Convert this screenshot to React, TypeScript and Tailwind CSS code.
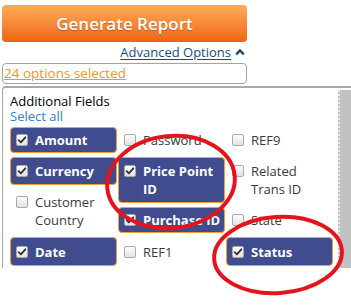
import React from 'react';

interface Field {
  label: string[];
  checked: boolean;
  h: string;
}

// three columns of report fields, heights taken from the picture
const columns: Field[][] = [
  [
    { label: ['Amount'], checked: true, h: 'h-[26px]' },
    { label: ['Currency'], checked: true, h: 'h-[28px]' },
    { label: ['Customer', 'Country'], checked: false, h: 'h-[44px]' },
    { label: ['Date'], checked: true, h: 'h-[29px]' },
  ],
  [
    { label: ['Password'], checked: false, h: 'h-[26px]' },
    { label: ['Price Point', 'ID'], checked: true, h: 'h-[46px]' },
    { label: ['Purchase ID'], checked: true, h: 'h-[26px]' },
    { label: ['REF1'], checked: false, h: 'h-[29px]' },
  ],
  [
    { label: ['REF9'], checked: false, h: 'h-[26px]' },
    { label: ['Related', 'Trans ID'], checked: false, h: 'h-[46px]' },
    { label: ['State'], checked: false, h: 'h-[26px]' },
    { label: ['Status'], checked: true, h: 'h-[29px]' },
  ],
];

function Box({ checked }: { checked: boolean }) {
  return (
    <span className="mt-[3px] w-[12px] h-[12px] shrink-0 rounded-[2px] border border-[#a9a9a9] bg-linear-to-b from-[#fdfdfd] to-[#e2e2e2] flex items-center justify-center">
      {checked && (
        <svg viewBox="0 0 12 12" className="w-[10px] h-[10px]">
          <path d="M2 6.2 L4.6 8.8 L10 2.8" fill="none" stroke="#333" strokeWidth="2.2" strokeLinecap="round" strokeLinejoin="round" />
        </svg>
      )}
    </span>
  );
}

function FieldItem({ field }: { field: Field }) {
  return (
    <div
      className={`${field.h} flex items-center pl-[5px] pr-[2px] rounded-[4px] ${
        field.checked
          ? 'bg-[#404c8d] border border-[#f2a12c] text-white font-bold'
          : 'border border-transparent text-[#3a3a3a]'
      }`}
    >
      <div className="flex items-start gap-[7px]">
        <Box checked={field.checked} />
        <div className="leading-[18px] whitespace-nowrap">
          {field.label.map((l) => (
            <div key={l}>{l}</div>
          ))}
        </div>
      </div>
    </div>
  );
}

export default function App() {
  return (
    <div className="relative w-[351px] h-[306px] overflow-hidden bg-white font-['Open_Sans',sans-serif] text-[13px]">
      <div className="pt-[5px] pl-[2px] w-[247px]">
        <button className="w-[245px] h-[37px] rounded-[4px] bg-linear-to-b from-[#fbac55] to-[#ef640e] text-white font-semibold text-[17px] [text-shadow:0_1px_1px_rgba(0,0,0,0.25)]">
          Generate Report
        </button>
        <div className="flex justify-end items-center h-[21px] pr-[2px] text-[#1e4a78]">
          <span className="underline underline-offset-2">Advanced Options </span>
          <svg viewBox="0 0 10 8" className="w-[10px] h-[8px] ml-[4px] mb-[2px]">
            <path d="M1.2 6.5 L5 2.5 L8.8 6.5" fill="none" stroke="#1e3f6b" strokeWidth="2.4" />
          </svg>
        </div>
        <div className="w-[245px] h-[21px] border border-[#a3a3a3] rounded-[4px] pl-[1px] flex items-center text-[#f7941d] underline leading-none text-[13.5px]">
          24 options selected
        </div>
      </div>

      <div className="mt-[2px] ml-[2px] h-[182px] flex border-t-2 border-l border-[#a8a8a8] rounded-tl-[4px]">
        <div className="flex-1 pl-[7px] pt-[6px]">
          <div className="text-black leading-[15px]">Additional Fields</div>
          <div className="text-[#2f80c6] leading-[15px]">Select all</div>
          <div className="mt-[3px] flex gap-[1px]">
            {columns.map((col, i) => (
              <div key={i} className="w-[107px] flex flex-col gap-[4px]">
                {col.map((f) => (
                  <FieldItem key={f.label.join(' ')} field={f} />
                ))}
              </div>
            ))}
          </div>
        </div>
        <div className="w-[13px] mt-[2px] border-l-2 border-dotted border-[#ececec] bg-[#c2c2c2]" />
      </div>

      <svg className="absolute inset-0 pointer-events-none" width="351" height="306">
        <ellipse cx="171" cy="182" rx="64" ry="46" fill="none" stroke="#e5141c" strokeWidth="4" transform="rotate(-6 171 182)" />
        <ellipse cx="278" cy="255" rx="64" ry="38" fill="none" stroke="#e5141c" strokeWidth="4" transform="rotate(-4 278 255)" />
      </svg>
    </div>
  );
}
